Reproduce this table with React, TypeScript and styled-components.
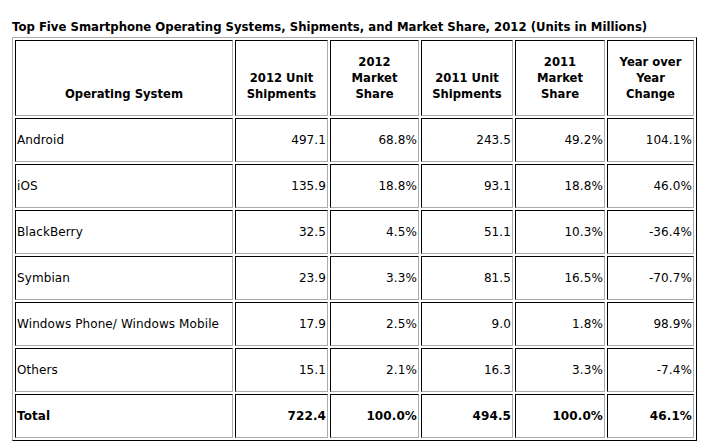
import React, {FC} from 'react';
import styled, {createGlobalStyle} from 'styled-components';

interface Row {
  os: string;
  units2012: string;
  share2012: string;
  units2011: string;
  share2011: string;
  change: string;
}

const rows: Row[] = [
  {os: 'Android', units2012: '497.1', share2012: '68.8%', units2011: '243.5', share2011: '49.2%', change: '104.1%'},
  {os: 'iOS', units2012: '135.9', share2012: '18.8%', units2011: '93.1', share2011: '18.8%', change: '46.0%'},
  {os: 'BlackBerry', units2012: '32.5', share2012: '4.5%', units2011: '51.1', share2011: '10.3%', change: '-36.4%'},
  {os: 'Symbian', units2012: '23.9', share2012: '3.3%', units2011: '81.5', share2011: '16.5%', change: '-70.7%'},
  {os: 'Windows Phone/ Windows Mobile', units2012: '17.9', share2012: '2.5%', units2011: '9.0', share2011: '1.8%', change: '98.9%'},
  {os: 'Others', units2012: '15.1', share2012: '2.1%', units2011: '16.3', share2011: '3.3%', change: '-7.4%'},
];

const total: Row = {os: 'Total', units2012: '722.4', share2012: '100.0%', units2011: '494.5', share2011: '100.0%', change: '46.1%'};

const headers: {label: string[]; width: number}[] = [
  {label: ['Operating System'], width: 218},
  {label: ['2012 Unit', 'Shipments'], width: 93},
  {label: ['2012', 'Market', 'Share'], width: 89},
  {label: ['2011 Unit', 'Shipments'], width: 92},
  {label: ['2011', 'Market', 'Share'], width: 90},
  {label: ['Year over', 'Year', 'Change'], width: 87},
];

const GlobalStyle = createGlobalStyle`
  html, body {
    margin: 0;
    padding: 0;
    background: #fff;
  }
  body {
    font-family: "DejaVu Sans", Verdana, sans-serif;
    color: #000;
  }
`;

const Page = styled.div`
  padding: 20px 0 0 12px;
`;

const Title = styled.div`
  font-size: 11.7px;
  font-weight: bold;
  line-height: 15px;
  margin-bottom: 2px;
  white-space: nowrap;
`;

const Table = styled.table`
  width: 685px;
  table-layout: fixed;
  border-collapse: separate;
  border-spacing: 2px;
  border: 1px solid;
  border-color: #acacac #000 #000 #acacac;
`;

const HeadCell = styled.th<{$w: number}>`
  box-sizing: border-box;
  width: ${p => p.$w}px;
  padding: 13px 1px;
  border: 1px solid;
  border-color: #000 #acacac #acacac #000;
  font-size: 11.6px;
  font-weight: bold;
  line-height: 16px;
  text-align: center;
  vertical-align: bottom;
  white-space: nowrap;
`;

const Cell = styled.td<{$left?: boolean; $bold?: boolean}>`
  box-sizing: border-box;
  height: 44px;
  padding: 1px;
  border: 1px solid;
  border-color: #000 #acacac #acacac #000;
  font-size: 12px;
  letter-spacing: 0.1px;
  font-weight: ${p => (p.$bold ? 'bold' : 'normal')};
  line-height: 15px;
  text-align: ${p => (p.$left ? 'left' : 'right')};
  vertical-align: middle;
  white-space: nowrap;
`;

const DataRow: FC<{row: Row; bold?: boolean}> = ({row, bold}) => (
  <tr>
    <Cell $left $bold={bold}>{row.os}</Cell>
    <Cell $bold={bold}>{row.units2012}</Cell>
    <Cell $bold={bold}>{row.share2012}</Cell>
    <Cell $bold={bold}>{row.units2011}</Cell>
    <Cell $bold={bold}>{row.share2011}</Cell>
    <Cell $bold={bold}>{row.change}</Cell>
  </tr>
);

const App: FC = () => (
  <Page>
    <GlobalStyle />
    <Title>Top Five Smartphone Operating Systems, Shipments, and Market Share, 2012 (Units in Millions)</Title>
    <Table>
      <thead>
        <tr>
          {headers.map(h => (
            <HeadCell key={h.label.join(' ')} $w={h.width}>
              {h.label.map((line, i) => (
                <React.Fragment key={line}>
                  {i > 0 && <br />}
                  {line}
                </React.Fragment>
              ))}
            </HeadCell>
          ))}
        </tr>
      </thead>
      <tbody>
        {rows.map(r => (
          <DataRow key={r.os} row={r} />
        ))}
        <DataRow row={total} bold />
      </tbody>
    </Table>
  </Page>
);

export default App;
